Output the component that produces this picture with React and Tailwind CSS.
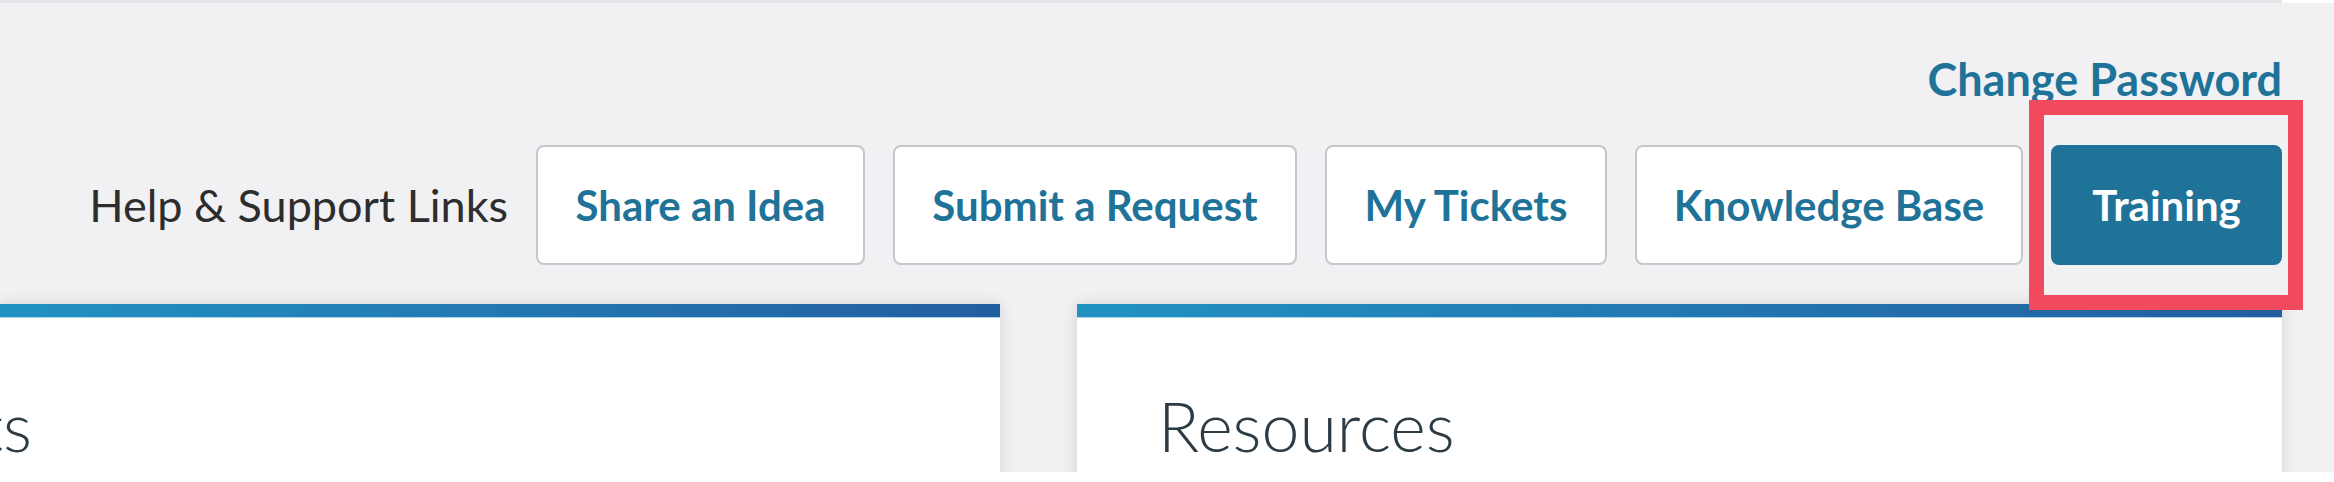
import React from 'react';

const links = [
  { label: 'Share an Idea', w: 'w-[329px]' },
  { label: 'Submit a Request', w: 'w-[404px]' },
  { label: 'My Tickets', w: 'w-[282px]' },
  { label: 'Knowledge Base', w: 'w-[388px]' },
];

const LinkButton = ({ label, w, active }) => (
  <div className="relative">
    <a
      href="#"
      className={`flex items-center justify-center h-[120px] ${w} rounded-[8px] text-[42px] font-bold leading-none whitespace-nowrap ${
        active
          ? 'bg-[#1f7399] text-white border-2 border-[#1f7399]'
          : 'bg-white text-[#1f7399] border-2 border-[#c6c7cc]'
      }`}
    >
      {label}
    </a>
    {active && (
      <div className="absolute -left-[22px] -right-[21px] -top-[45px] -bottom-[45px] border-[15px] border-[#f24a5d] z-20 pointer-events-none"></div>
    )}
  </div>
);

const Panel = ({ children, className }) => (
  <div className={`bg-white shadow-[0_0_14px_rgba(0,0,0,0.13)] ${className}`}>
    <div className="h-[14px] bg-gradient-to-r from-[#2193c1] to-[#235e9f] border-b border-[#a4d6ec]"></div>
    {children}
  </div>
);

export default function App() {
  return (
    <div className="w-[2334px] h-[482px] bg-white overflow-hidden" style={{ fontFamily: 'Lato, "Open Sans", sans-serif' }}>
      <div className="h-[472px] bg-[#f1f1f3] overflow-hidden">
        {/* top edge */}
        <div className="flex h-[3px]">
          <div className="w-[2282px] bg-[#e3e4e8]"></div>
          <div className="flex-1 bg-white"></div>
        </div>

        {/* help links header */}
        <div className="relative z-10 flex flex-col items-end pr-[52px] pt-[54px]">
          <a href="#" className="text-[45px] font-bold leading-[45px] text-[#1f7399]">
            Change Password
          </a>
          <div className="flex items-center gap-[28px] mt-[43px]">
            <span className="text-[45px] text-[#2d2d2d] leading-none whitespace-nowrap">Help &amp; Support Links</span>
            {links.map((l) => (
              <LinkButton key={l.label} label={l.label} w={l.w} />
            ))}
            <LinkButton label="Training" w="w-[231px]" active />
          </div>
        </div>

        {/* dashboard panels */}
        <div className="flex gap-[77px] mt-[39px]">
          <Panel className="w-[1000px] h-[200px]">
            {/* heading scrolled past the left edge, only its end shows */}
            <div className="flex justify-end w-[32px] pt-[67px]">
              <h2 className="text-[68px] font-light leading-[1.2] text-[#2d3b45] whitespace-nowrap shrink-0">
                Announcements
              </h2>
            </div>
          </Panel>
          <Panel className="w-[1205px] h-[200px]">
            <h2 className="pl-[81px] pt-[67px] text-[68px] font-light leading-[1.2] text-[#2d3b45] whitespace-nowrap">
              Resources
            </h2>
          </Panel>
        </div>
      </div>
    </div>
  );
}
